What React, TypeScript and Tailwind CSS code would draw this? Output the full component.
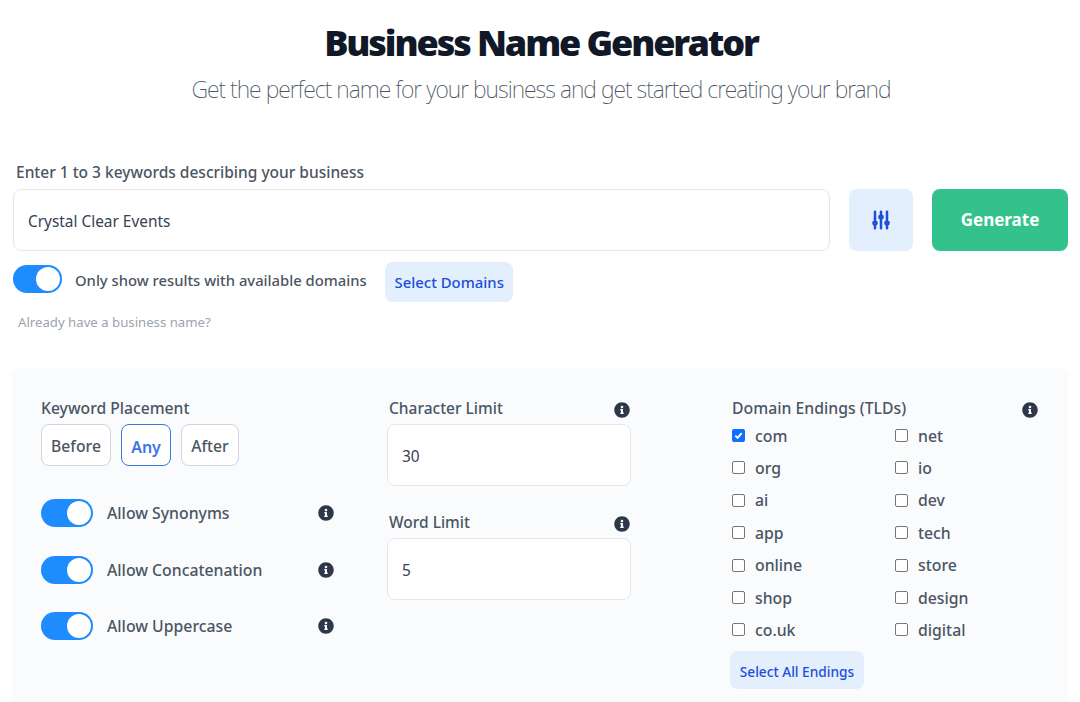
import React from "react";
import { FaInfoCircle } from "react-icons/fa";
import { HiOutlineAdjustmentsVertical } from "react-icons/hi2";

function Toggle() {
  return (
    <span className="flex h-[28px] w-[52px] shrink-0 items-center justify-end rounded-full bg-[#1e8bff] pr-[2px]">
      <span className="h-[24px] w-[24px] rounded-full bg-white" />
    </span>
  );
}

function SwitchRow({ label }: { label: string }) {
  return (
    <div className="flex h-[28px] items-center">
      <Toggle />
      <span className="ml-[14px] w-[211px] pt-[2px] text-[15.8px] font-medium text-[#4b5563]">{label}</span>
      <FaInfoCircle className="text-[16px] text-[#2d3748]" />
    </div>
  );
}

function NumberField({ label, value }: { label: string; value: string }) {
  return (
    <div className="w-[244px]">
      <div className="flex h-[24px] items-center justify-between pl-[2px]">
        <span className="pt-[2px] text-[15.5px] font-medium text-[#4b5563]">{label}</span>
        <FaInfoCircle className="mr-[1px] mt-[3px] text-[16px] text-[#2d3748]" />
      </div>
      <div className="mt-[4px] flex h-[62px] items-center rounded-[8px] border border-[#e5e7eb] bg-white pl-[14px] pt-[3px] text-[15.4px] text-[#374151]">
        {value}
      </div>
    </div>
  );
}

function Tld({ label, checked }: { label: string; checked?: boolean }) {
  return (
    <div className="flex h-[32.4px] items-center">
      {checked ? (
        <span className="flex h-[13px] w-[13px] items-center justify-center rounded-[2px] bg-[#0f6fff]">
          <svg viewBox="0 0 12 12" className="h-[11px] w-[11px]">
            <path d="M2.5 6.2 5 8.6 9.5 3.4" fill="none" stroke="#fff" strokeWidth="2" />
          </svg>
        </span>
      ) : (
        <span className="h-[13px] w-[13px] rounded-[2px] border border-[#767676] bg-white" />
      )}
      <span className="ml-[10px] mt-[2px] text-[15.8px] font-medium text-[#4b5563]">{label}</span>
    </div>
  );
}

const tlds: [string, string][] = [
  ["com", "net"],
  ["org", "io"],
  ["ai", "dev"],
  ["app", "tech"],
  ["online", "store"],
  ["shop", "design"],
  ["co.uk", "digital"],
];

export default function App() {
  return (
    <div
      className="h-[702px] w-[1080px] overflow-hidden bg-white pl-[12px] pr-[12px]"
      style={{ fontFamily: '"Noto Sans", sans-serif' }}
    >
      <header className="flex flex-col items-center pl-[2px] pt-[20px]">
        <h1 className="text-[36px] leading-[46px] font-black tracking-[-2.1px] text-[#111827]">
          Business Name Generator
        </h1>
        <p className="mt-[7px] text-[23px] leading-[32px] font-extralight tracking-[-0.98px] text-[#4b5563]">
          Get the perfect name for your business and get started creating your brand
        </p>
      </header>

      <section className="mt-[55px]">
        <label className="block h-[24px] pl-[4px] text-[15.5px] leading-[24px] font-medium text-[#4b5563]">
          Enter 1 to 3 keywords describing your business
        </label>
        <div className="mt-[5px] flex pl-[1px]">
          <div className="flex h-[62px] w-[817px] items-center rounded-[8px] border border-[#e5e7eb] pl-[14px] pt-[3px] text-[15.4px] text-[#374151]">
            Crystal Clear Events
          </div>
          <button className="ml-[19px] flex h-[62px] w-[64px] items-center justify-center rounded-[8px] bg-[#e3effd]">
            <HiOutlineAdjustmentsVertical strokeWidth={2.5} className="text-[24px] text-[#1d4ed8]" />
          </button>
          <button className="ml-[19px] h-[62px] w-[136px] rounded-[8px] bg-[#34c28c] text-[17px] font-bold text-white">
            Generate
          </button>
        </div>
        <div className="mt-[11px] flex h-[40px] items-start pl-[1px]">
          <span className="mt-[3px] flex h-[28px] w-[49px] items-center justify-end rounded-full bg-[#1e8bff] pr-[2px]">
            <span className="h-[24px] w-[24px] rounded-full bg-white" />
          </span>
          <span className="ml-[13px] mt-[7px] text-[14.8px] leading-[22px] font-medium text-[#4b5563]">
            Only show results with available domains
          </span>
          <button className="ml-[18px] h-[40px] w-[128px] rounded-[8px] bg-[#e3effd] pl-[1px] text-[14.9px] font-medium text-[#1d4ed8]">
            Select Domains
          </button>
        </div>
        <p className="mt-[10px] pl-[6px] text-[13.2px] leading-[20px] text-[#9ca3af]">
          Already have a business name?
        </p>
      </section>

      <section className="mt-[36px] flex h-[334px] rounded-t-[8px] bg-[#f9fbfd] pl-[29px] pt-[28px]">
        <div className="w-[346px]">
          <div className="h-[24px] text-[15.7px] leading-[24px] font-medium text-[#4b5563]">Keyword Placement</div>
          <div className="mt-[4px] flex gap-[10px]">
            <button className="h-[42px] w-[70px] rounded-[8px] border border-[#d1d5db] bg-white pt-[4px] text-[15.7px] font-medium text-[#4b5563]">
              Before
            </button>
            <button className="h-[42px] w-[50px] rounded-[8px] border border-[#3b76d9] bg-white pt-[3px] text-[16px] font-semibold text-[#3b76e6]">
              Any
            </button>
            <button className="h-[42px] w-[58px] rounded-[8px] border border-[#d1d5db] bg-white pt-[4px] text-[15.7px] font-medium text-[#4b5563]">
              After
            </button>
          </div>
          <div className="mt-[33px] flex flex-col gap-[28.5px]">
            <SwitchRow label="Allow Synonyms" />
            <SwitchRow label="Allow Concatenation" />
            <SwitchRow label="Allow Uppercase" />
          </div>
        </div>

        <div className="flex w-[345px] flex-col gap-[24px]">
          <NumberField label="Character Limit" value="30" />
          <NumberField label="Word Limit" value="5" />
        </div>

        <div className="w-[306px]">
          <div className="flex h-[24px] items-center justify-between">
            <span className="pt-[2px] text-[15.8px] font-medium text-[#4b5563]">Domain Endings (TLDs)</span>
            <FaInfoCircle className="mt-[3px] text-[16px] text-[#2d3748]" />
          </div>
          <div className="mt-[-0.7px] grid grid-cols-[163px_1fr]">
            {tlds.flat().map((t, i) => (
              <Tld key={t} label={t} checked={i === 0} />
            ))}
          </div>
          <button className="ml-[-2px] mt-[5px] h-[38px] w-[134px] rounded-[8px] bg-[#e3effd] pt-[4px] text-[13.7px] font-medium text-[#1d4ed8]">
            Select All Endings
          </button>
        </div>
      </section>
    </div>
  );
}
